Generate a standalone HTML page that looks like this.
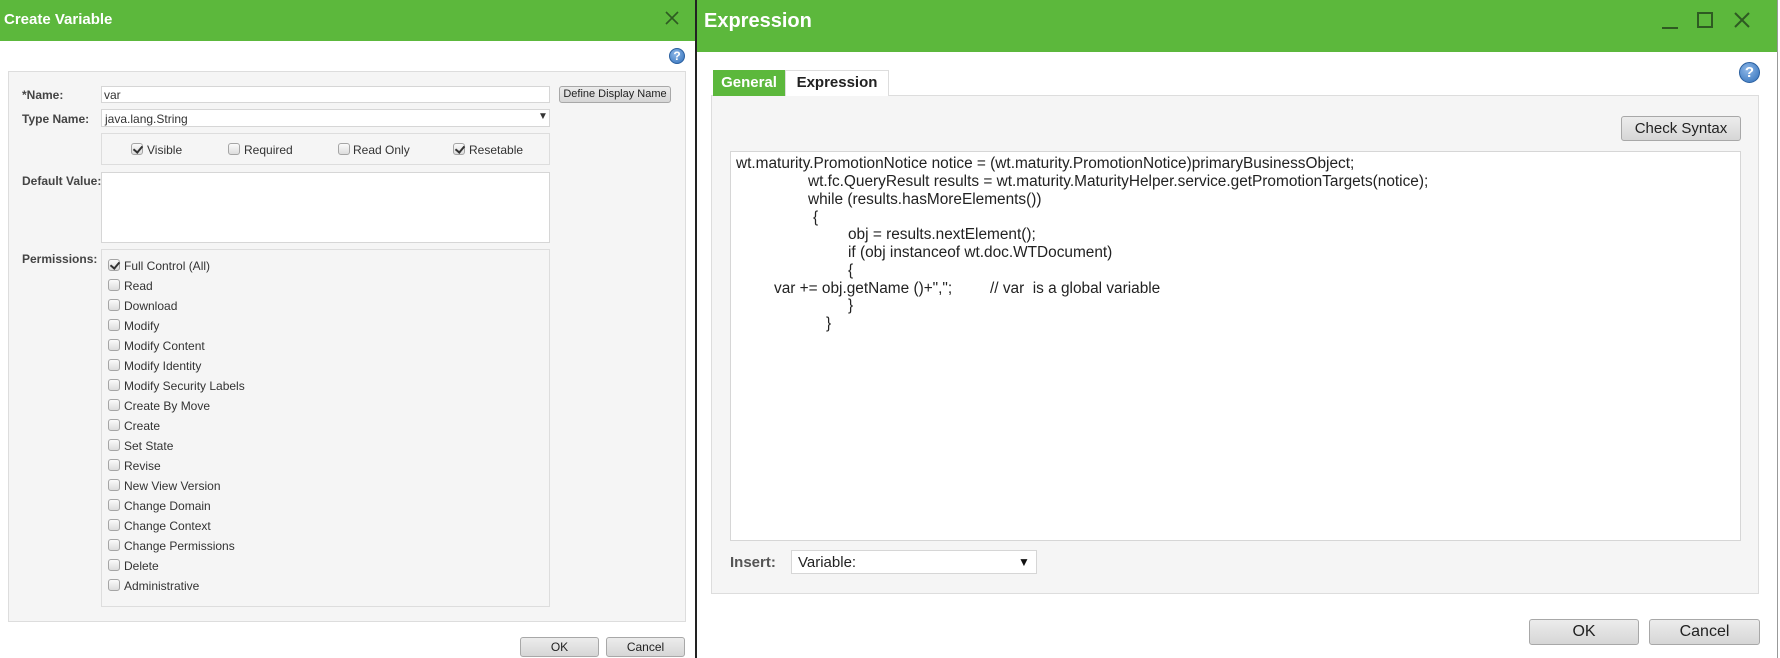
<!DOCTYPE html>
<html><head><meta charset="utf-8"><style>
*{box-sizing:border-box;margin:0;padding:0}
body{width:1780px;height:658px;position:relative;overflow:hidden;background:#fff;font-family:"Liberation Sans",Arial,sans-serif;color:#333}
.a{position:absolute}
.hdr{background:#5cb83c}
.lbl{font-size:12px;font-weight:bold;color:#444}
.inp{background:#fff;border:1px solid #d6d6d6}
.btn{background:linear-gradient(#ececec,#d6d6d6);border:1px solid #a8a8a8;border-radius:3px;text-align:center;color:#222}
.cb{position:absolute;width:12px;height:12px;border:1px solid #a5a5a5;border-radius:3px;background:linear-gradient(#fafafa,#dcdcdc)}
.cb.k::after{content:"";position:absolute;left:3px;top:0px;width:4px;height:7px;border:solid #333;border-width:0 2px 2px 0;transform:rotate(40deg)}
.t{position:absolute;font-size:12px;color:#333;white-space:nowrap}
.help{position:absolute;border-radius:50%;background:radial-gradient(circle at 40% 35%,#8fb8e8,#2f6fba);color:#fff;font-weight:bold;text-align:center;border:1px solid #2a5f9f}
.code{position:absolute;font-size:15.4px;color:#222;white-space:pre;line-height:18px}
</style></head><body>
<div class="a hdr" style="left:0;top:0;width:696px;height:41px"></div>
<div class="a" style="left:4px;top:11px;font-size:15px;font-weight:bold;color:#fff">Create Variable</div>
<svg class="a" style="left:664px;top:10px" width="16" height="16"><path d="M2 2L14 14M14 2L2 14" stroke="#2e5a22" stroke-width="1.6"/></svg>
<div class="help" style="left:669px;top:48px;width:16px;height:16px;font-size:12px;line-height:14px">?</div>
<div class="a" style="left:8px;top:71px;width:678px;height:551px;background:#f5f5f5;border:1px solid #ddd"></div>
<div class="a lbl" style="left:22px;top:88px">*Name:</div>
<div class="a inp" style="left:101px;top:86px;width:449px;height:17px"></div>
<div class="t" style="left:104px;top:88px">var</div>
<div class="a btn" style="left:559px;top:86px;width:112px;height:17px;font-size:11px;line-height:15px">Define Display Name</div>
<div class="a lbl" style="left:22px;top:112px">Type Name:</div>
<div class="a inp" style="left:101px;top:109px;width:449px;height:18px"></div>
<div class="t" style="left:105px;top:112px">java.lang.String</div>
<div class="t" style="left:538px;top:111px;font-size:10px">&#9660;</div>
<div class="a" style="left:101px;top:133px;width:449px;height:32px;border:1px solid #ddd;background:#f5f5f5"></div>
<div class="cb k" style="left:131px;top:143px"></div><div class="t" style="left:147px;top:143px">Visible</div>
<div class="cb" style="left:228px;top:143px"></div><div class="t" style="left:244px;top:143px">Required</div>
<div class="cb" style="left:338px;top:143px"></div><div class="t" style="left:353px;top:143px">Read Only</div>
<div class="cb k" style="left:453px;top:143px"></div><div class="t" style="left:469px;top:143px">Resetable</div>
<div class="a lbl" style="left:22px;top:174px">Default Value:</div>
<div class="a inp" style="left:101px;top:172px;width:449px;height:71px"></div>
<div class="a lbl" style="left:22px;top:252px">Permissions:</div>
<div class="a" style="left:101px;top:249px;width:449px;height:358px;border:1px solid #ddd;background:#f5f5f5"></div>
<div class="cb k" style="left:108px;top:259px"></div><div class="t" style="left:124px;top:259px">Full Control (All)</div>
<div class="cb" style="left:108px;top:279px"></div><div class="t" style="left:124px;top:279px">Read</div>
<div class="cb" style="left:108px;top:299px"></div><div class="t" style="left:124px;top:299px">Download</div>
<div class="cb" style="left:108px;top:319px"></div><div class="t" style="left:124px;top:319px">Modify</div>
<div class="cb" style="left:108px;top:339px"></div><div class="t" style="left:124px;top:339px">Modify Content</div>
<div class="cb" style="left:108px;top:359px"></div><div class="t" style="left:124px;top:359px">Modify Identity</div>
<div class="cb" style="left:108px;top:379px"></div><div class="t" style="left:124px;top:379px">Modify Security Labels</div>
<div class="cb" style="left:108px;top:399px"></div><div class="t" style="left:124px;top:399px">Create By Move</div>
<div class="cb" style="left:108px;top:419px"></div><div class="t" style="left:124px;top:419px">Create</div>
<div class="cb" style="left:108px;top:439px"></div><div class="t" style="left:124px;top:439px">Set State</div>
<div class="cb" style="left:108px;top:459px"></div><div class="t" style="left:124px;top:459px">Revise</div>
<div class="cb" style="left:108px;top:479px"></div><div class="t" style="left:124px;top:479px">New View Version</div>
<div class="cb" style="left:108px;top:499px"></div><div class="t" style="left:124px;top:499px">Change Domain</div>
<div class="cb" style="left:108px;top:519px"></div><div class="t" style="left:124px;top:519px">Change Context</div>
<div class="cb" style="left:108px;top:539px"></div><div class="t" style="left:124px;top:539px">Change Permissions</div>
<div class="cb" style="left:108px;top:559px"></div><div class="t" style="left:124px;top:559px">Delete</div>
<div class="cb" style="left:108px;top:579px"></div><div class="t" style="left:124px;top:579px">Administrative</div>
<div class="a btn" style="left:520px;top:637px;width:79px;height:20px;font-size:12px;line-height:18px">OK</div>
<div class="a btn" style="left:606px;top:637px;width:79px;height:20px;font-size:12px;line-height:18px">Cancel</div>

<div class="a" style="left:695px;top:0;width:1083px;height:658px;background:#fff;border-left:2px solid #222;border-right:1px solid #999"></div>
<div class="a hdr" style="left:697px;top:0;width:1080px;height:52px"></div>
<div class="a" style="left:704px;top:10px;font-size:20px;font-weight:bold;color:#fff">Expression</div>
<div class="a" style="left:1662px;top:27px;width:16px;height:2px;background:#2e5a22"></div>
<div class="a" style="left:1697px;top:12px;width:16px;height:16px;border:2px solid #2e5a22"></div>
<svg class="a" style="left:1733px;top:11px" width="18" height="18"><path d="M2 2L16 16M16 2L2 16" stroke="#2e5a22" stroke-width="2"/></svg>
<div class="help" style="left:1739px;top:62px;width:21px;height:21px;font-size:15px;line-height:19px">?</div>
<div class="a" style="left:711px;top:95px;width:1048px;height:499px;background:#f5f5f5;border:1px solid #ddd"></div>
<div class="a" style="left:713px;top:70px;width:72px;height:26px;background:#5cb83c;color:#fff;font-size:15px;font-weight:bold;line-height:26px;text-align:center">General</div>
<div class="a" style="left:785px;top:70px;width:104px;height:26px;background:#fff;border:1px solid #ddd;border-bottom:none;color:#222;font-size:15px;font-weight:bold;line-height:24px;text-align:center">Expression</div>
<div class="a btn" style="left:1621px;top:116px;width:120px;height:25px;font-size:15px;line-height:23px">Check Syntax</div>
<div class="a inp" style="left:730px;top:151px;width:1011px;height:390px"></div>
<div class="code" style="left:736px;top:155px">wt.maturity.PromotionNotice notice = (wt.maturity.PromotionNotice)primaryBusinessObject;</div>
<div class="code" style="left:808px;top:173px">wt.fc.QueryResult results = wt.maturity.MaturityHelper.service.getPromotionTargets(notice);</div>
<div class="code" style="left:808px;top:191px">while (results.hasMoreElements())</div>
<div class="code" style="left:813px;top:209px">{</div>
<div class="code" style="left:848px;top:226px">obj = results.nextElement();</div>
<div class="code" style="left:848px;top:244px">if (obj instanceof wt.doc.WTDocument)</div>
<div class="code" style="left:848px;top:262px">{</div>
<div class="code" style="left:774px;top:280px">var += obj.getName ()+",";</div>
<div class="code" style="left:990px;top:280px">// var  is a global variable</div>
<div class="code" style="left:848px;top:297px">}</div>
<div class="code" style="left:826px;top:315px">}</div>
<div class="a" style="left:730px;top:554px;font-size:15px;font-weight:bold;color:#555">Insert:</div>
<div class="a inp" style="left:791px;top:550px;width:246px;height:24px"></div>
<div class="a" style="left:798px;top:554px;font-size:15px;color:#222">Variable:</div>
<div class="a" style="left:1018px;top:555px;font-size:12px;color:#111">&#9660;</div>
<div class="a btn" style="left:1529px;top:619px;width:110px;height:26px;font-size:16px;line-height:24px">OK</div>
<div class="a btn" style="left:1649px;top:619px;width:111px;height:26px;font-size:16px;line-height:24px">Cancel</div>
</body></html>
